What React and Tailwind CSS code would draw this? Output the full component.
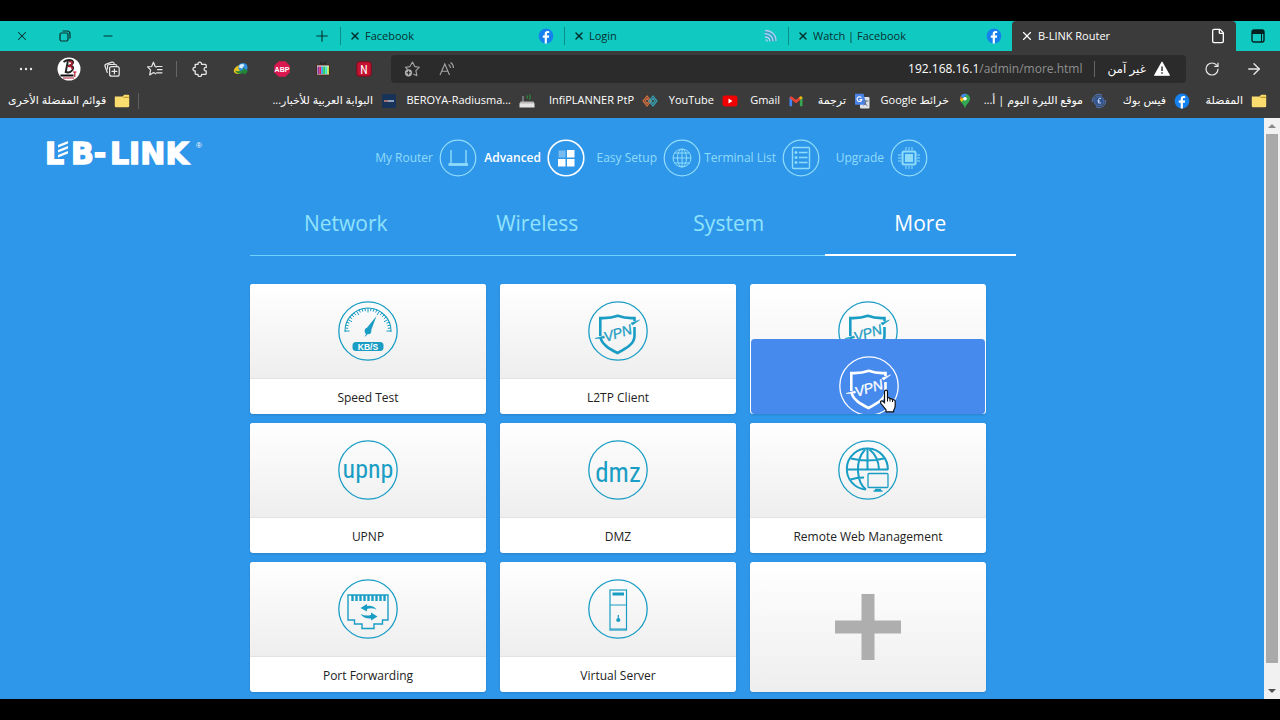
import React from "react";
import { X, Plus, Minus, File, RotateCw, ArrowRight } from "lucide-react";

const latin = "font-['Open_Sans','DejaVu_Sans',sans-serif]";

/* ---------- browser icons ---------- */

function Facebook() {
  return (
    <svg viewBox="0 0 16 16" className="size-4 shrink-0" aria-hidden="true">
      <circle cx="8" cy="8" r="7.4" fill="#1580ee" />
      <path d="M8.9 15.4V9.7h1.9l.4-2.2H8.9V6.2c0-.7.4-1.1 1.2-1.1h1.1V3.2c-.4-.1-1-.1-1.6-.1-1.8 0-2.9 1-2.9 2.8v1.6H4.8v2.2h1.9v5.7z" fill="#fff" />
    </svg>
  );
}

function Waves() {
  return (
    <svg viewBox="0 0 16 16" className="size-4 shrink-0" fill="none" strokeWidth="1.300" aria-hidden="true">
      <path d="M3 2.500c6.500 0 11 4 11 10.500M2.500 5.700c5 0 8.500 3 8.500 7.500M3 9c3.500 0 5 2 5 4.500M3.500 11.800c1.200 0 1.800.7 1.800 1.700" stroke="#b5cdf0" />
      <path d="M3 4.100c6 0 9.500 3.500 9.500 9M3 7.400c4 0 6.500 2.500 6.500 6" stroke="#4f86c6" strokeWidth=".9" />
    </svg>
  );
}

function Folder() {
  return (
    <svg viewBox="0 0 16 16" className="size-4 shrink-0" aria-hidden="true">
      <path d="M.8 3.500h8l1.200-1.700h4.200q1 0 1 1V13q0 1.200-1.200 1.200H2Q.8 14.200.8 13z" fill="#fbdc6e" />
      <path d="M9.500 4.300h5.700" stroke="#b98b1f" />
    </svg>
  );
}

function Restore() {
  return (
    <svg viewBox="0 0 12 12" className="size-3" fill="none" stroke="#0b2b2b" strokeWidth="1.2" aria-hidden="true">
      <rect x="1" y="3" width="8" height="8" rx="1.500" />
      <path d="M3.500 1h4.500q3 0 3 3v4.500" />
    </svg>
  );
}

function PageWindow() {
  return (
    <svg viewBox="0 0 14 14" className="size-3.5" aria-hidden="true">
      <rect x="1" y="1" width="12" height="12" rx="2" fill="none" stroke="#06201f" strokeWidth="1.400" />
      <path d="M1 2q0-1 1-1h10q1 0 1 1v3H1z" fill="#06201f" />
      <path d="M10.500 5v8" stroke="#06201f" />
    </svg>
  );
}

function Avatar() {
  return (
    <svg viewBox="0 0 24 24" className="size-6" aria-hidden="true">
      <circle cx="12" cy="12" r="11.500" fill="#fff" />
      <path d="M8.500 16 11 3.500M6.500 5q4-3 8.500-1.500c2.500 1.500.5 4.500-4 5.500 5-1 6 1.500 4.500 4-1.500 2-4 3-6.500 2" fill="none" stroke="#222" strokeWidth="1.900" />
      <path d="M12 4.500q4 0 3 2.500t-4 2.200q5 0 4 3" fill="none" stroke="#b3172b" strokeWidth="1.600" />
      <path d="M3.500 18.500h13" stroke="#111" strokeWidth="2" />
      <path d="M16 15h3.500M17.800 15v5M6 21h11" stroke="#b3172b" strokeWidth="1.200" />
    </svg>
  );
}

function Collections() {
  return (
    <svg viewBox="0 0 16 16" className="size-4" fill="none" stroke="#e8e8e8" strokeWidth="1.200" strokeLinecap="round" aria-hidden="true">
      <rect x="5.600" y="5.600" width="9.600" height="9.600" rx="2" />
      <path d="M10.400 8v4.800M8 10.400h4.800" />
      <path d="M3.300 11.500 1 5.300q-.4-1.700 1.200-2.200l5.800-2q1.600-.4 2.200 1.400" />
      <path d="M3.500 8V5.500q0-2 2-2h5.500q1.300 0 1.700.8" />
    </svg>
  );
}

function Favorites() {
  return (
    <svg viewBox="0 0 16 16" className="size-4" fill="none" stroke="#e8e8e8" strokeWidth="1.200" strokeLinejoin="round" strokeLinecap="round" aria-hidden="true">
      <path d="M9.500 6 8.200 5.600 6.400 1.200 4.700 5.500.6 5.900l3 3-.9 5 3.900-2.300 1.900 1.200M10 5.500h5M10.500 8.700h4.500M9.500 11.800h5.500" />
    </svg>
  );
}

function Extensions() {
  return (
    <svg viewBox="0 0 16 16" className="size-4" fill="none" stroke="#e8e8e8" strokeWidth="1.300" strokeLinejoin="round" aria-hidden="true">
      <path d="M3.200 3.400h2.700a1.900 1.900 0 1 1 3.700 0h3.700q.9 0 .9.900v2.200a1.700 1.700 0 1 0 0 3.300v2.600q0 .9-.9.900H9.600a1.900 1.900 0 1 1-3.700 0H4.100q-.9 0-.9-.9V9.900a1.800 1.800 0 1 1 0-3.500z" />
    </svg>
  );
}

function Idm() {
  return (
    <svg viewBox="0 0 16 16" className="size-4" aria-hidden="true">
      <ellipse cx="6.500" cy="8.500" rx="6" ry="4" transform="rotate(-25 6.500 8.500)" fill="#e9c21c" />
      <circle cx="10" cy="6.500" r="4.600" fill="#2f8fdb" />
      <path d="M6.500 4q2.500-2 5 0L9 7.500 6 6.500z" fill="#d9edf8" />
      <path d="M2 9.500q4 2 8.500-1l-.5-2 5 3.500-3.500 4-.7-2Q5 14.500 2 9.500z" fill="#23863a" />
    </svg>
  );
}

function Abp() {
  return (
    <svg viewBox="0 0 16 16" className="size-4" aria-hidden="true">
      <path d="M4.700.2h6.600l4.500 4.500v6.600l-4.500 4.500H4.700L.2 11.300V4.700z" fill="#d8184f" />
      <text x="8" y="10.500" textAnchor="middle" fontSize="7" fontWeight="700" fill="#fff" fontFamily="Liberation Sans, sans-serif">ABP</text>
    </svg>
  );
}

function Tv() {
  return (
    <svg viewBox="0 0 16 16" className="size-4" aria-hidden="true">
      <path d="m5 1 3 3 3-3" fill="none" stroke="#222" strokeWidth="1.200" />
      <rect x="1.500" y="4" width="13" height="10" fill="#eee" stroke="#4a2c1c" />
      <path d="M3.200 5.500V13" stroke="#7a3fa0" strokeWidth="1.600" />
      <path d="M5.200 5.500V13" stroke="#e21b5a" strokeWidth="2" />
      <path d="M7.200 5.500V13" stroke="#30a7f0" strokeWidth="2" />
      <path d="M9.200 5.500V13" stroke="#35c94e" strokeWidth="2" />
      <path d="M11.200 5.500V13" stroke="#3de1d1" strokeWidth="2" />
      <path d="M13.200 5.500V13" stroke="#b4e84a" strokeWidth="1.600" />
    </svg>
  );
}

function NBox() {
  return (
    <svg viewBox="0 0 16 16" className="size-4" aria-hidden="true">
      <rect x=".8" y=".8" width="14.400" height="14.400" rx="2.500" fill="#c41230" stroke="#7d0a1d" />
      <text x="8" y="12.500" textAnchor="middle" fontSize="12" fill="#fff" fontFamily="Roboto Condensed, Liberation Sans, sans-serif">N</text>
    </svg>
  );
}

function AddFavorite() {
  return (
    <svg viewBox="0 0 16 16" className="size-4" fill="none" stroke="#a5a5a5" strokeWidth="1.100" strokeLinejoin="round" aria-hidden="true">
      <path d="M3.600 8.500 1.400 6.200l4.500-.6L8.500 1l2.300 4.600 4.600.6-3.500 3.500 1 5-3.500-1.800" />
      <circle cx="4.500" cy="11.800" r="3.600" fill="#b0b0b0" stroke="none" />
      <path d="M4.500 9.800v4M2.500 11.800h4" stroke="#2b2b2b" />
    </svg>
  );
}

function ReadAloud() {
  return (
    <svg viewBox="0 0 16 16" className="size-4" fill="none" stroke="#a5a5a5" strokeWidth="1.100" aria-hidden="true">
      <path d="M1 14 5.800 3l4.700 11M2.800 10.200h6M9.500 3.500q2 1.200 2 3.500M11.500 1.500q3 1.700 3 5.500" />
    </svg>
  );
}

function Warning() {
  return (
    <svg viewBox="0 0 16 16" className="size-4 shrink-0" aria-hidden="true">
      <path d="M8 1.200 15.300 14.200H.7z" fill="#fff" stroke="#fff" strokeWidth="1.200" strokeLinejoin="round" />
      <path d="M8 5.500v4.500M8 11.300v1.500" stroke="#222" strokeWidth="1.400" />
    </svg>
  );
}

function Radius() {
  return (
    <svg viewBox="0 0 16 16" className="size-4 shrink-0" aria-hidden="true">
      <path d="M4 3v7" stroke="#aaa" />
      <path d="M1.500 8.500h13l1 2.500H.5z" fill="#bbb" />
      <rect x=".5" y="10.500" width="15" height="4" fill="#e4e4e4" />
      <path d="M8 5.500q1-1.500 0-3M10.500 6.500q1.500-2.500 0-5" fill="none" stroke="#2c8a3d" strokeWidth="1.200" />
    </svg>
  );
}

function Infi() {
  return (
    <svg viewBox="0 0 16 16" className="size-4 shrink-0" fill="none" strokeWidth="1.200" aria-hidden="true">
      <path d="M5 3 1 8l4 5 4-5zM5 5.500 3 8l2 2.500L7 8z" stroke="#d9703f" />
      <path d="M11 3 7 8l4 5 4-5zM11 5.500 9 8l2 2.500L13 8z" stroke="#35a3b5" />
    </svg>
  );
}

function YouTube() {
  return (
    <svg viewBox="0 0 16 16" className="size-4 shrink-0" aria-hidden="true">
      <rect x=".5" y="2.500" width="15" height="11" rx="3" fill="#f00000" />
      <path d="M6.500 5.600v4.800l4-2.400z" fill="#fff" />
    </svg>
  );
}

function GmailMark() {
  return (
    <svg viewBox="0 0 16 16" className="size-4 shrink-0" fill="none" strokeWidth="2.600" aria-hidden="true">
      <path d="M2.800 13.200V4" stroke="#4285f4" />
      <path d="M13.200 13.200V4" stroke="#34a853" />
      <path d="M2.200 4 8 8.500 13 4.500" stroke="#ea4335" />
      <path d="m11.800 5.500 2-1.600" stroke="#fbbc04" />
    </svg>
  );
}

function Translate() {
  return (
    <svg viewBox="0 0 16 16" className="size-4 shrink-0" aria-hidden="true">
      <rect x="6" y="4" width="9.500" height="11.500" rx="1" fill="#dfe3e8" />
      <path d="M1 .8h8.500l3 11H1z" fill="#4c83e6" />
      <path d="M7.300 4.600a2.400 2.400 0 1 0 .5 2H5.500" fill="none" stroke="#fff" strokeWidth="1.100" />
      <path d="M9.500 8h5M12 7v1.500q-.5 2.500-2.500 4M10.500 10q1 2 3 2.800" fill="none" stroke="#66717f" strokeWidth=".9" />
    </svg>
  );
}

function MapPin() {
  return (
    <svg viewBox="0 0 16 16" className="size-4 shrink-0" aria-hidden="true">
      <path d="M8 .8a5 5 0 0 1 5 5c0 3.600-3.800 5-5 9.400-1.200-4.400-5-5.800-5-9.400a5 5 0 0 1 5-5z" fill="#34a853" />
      <path d="M8 .8a5 5 0 0 0-4.200 2.300L6.300 5 10 1.200A5 5 0 0 0 8 .8z" fill="#4285f4" />
      <path d="M3.800 3.100A5 5 0 0 0 3 6l3 1z" fill="#ea4335" />
      <path d="M3 5.800q.2 1.700 1.500 3.200L9.500 4 6.300 5z" fill="#fbbc04" />
      <circle cx="8" cy="5.800" r="1.800" fill="#fff" />
    </svg>
  );
}

function Lira() {
  return (
    <svg viewBox="0 0 16 16" className="size-4 shrink-0" fill="none" stroke="#4c6fa8" aria-hidden="true">
      <circle cx="8" cy="8" r="5" fill="#33548f" />
      <path d="M1.500 9A6.500 6.500 0 0 1 11 2.200M14.500 7A6.500 6.500 0 0 1 5 13.800" strokeWidth="1.200" />
      <path d="M10 5.500q-2.500-1-2.500 1v3.500H10M6.500 8h2.500" stroke="#c7d5ee" />
    </svg>
  );
}

function NewsMark() {
  return (
    <svg viewBox="0 0 16 16" className="size-4 shrink-0" aria-hidden="true">
      <rect x="1" y="1" width="14" height="14" rx="1" fill="#18335a" />
      <path d="M3 8h4" stroke="#d08a80" strokeWidth="1.500" />
      <path d="M7 8h6" stroke="#b9c6db" strokeWidth="1.500" />
    </svg>
  );
}

/* ---------- router page icons ---------- */

function Logo() {
  return (
    <svg viewBox="-6 -6 176 44" className="h-11 w-44 shrink-0" fill="#fff" role="img" aria-label="B-LINK">
      <g fontFamily="DejaVu Sans, sans-serif" fontWeight="700" fontSize="30" stroke="#fff" strokeWidth="1.400">
        <text x="-1" y="26">L</text>
        <text x="25" y="26">B-</text>
        <text x="64" y="26">LINK</text>
      </g>
      <path d="m12 7 10-4v2.500l-10 4zM12 12l10-4v2.500l-10 4zM12 17l10-4v2.500l-10 4z" />
      <text x="150" y="10" fontSize="8" fontFamily="Liberation Sans, sans-serif">®</text>
    </svg>
  );
}

function NavCircle({ children, active }) {
  return (
    <svg viewBox="0 0 38 38" className="size-[38px] shrink-0" fill="none" stroke="currentColor" aria-hidden="true">
      <circle cx="19" cy="19" r="17.800" strokeWidth={active ? 1.6 : 1.2} />
      {children}
    </svg>
  );
}

const navIcons = {
  router: (
    <g>
      <path d="M12 11v13M27 11v13" strokeWidth="1.400" />
      <path d="M9.500 25.500h19.500" strokeWidth="2.800" />
    </g>
  ),
  tiles: (
    <g stroke="none" fill="currentColor">
      <rect x="11.500" y="11.500" width="7" height="7" opacity=".35" />
      <rect x="20" y="11" width="7.500" height="7.500" />
      <rect x="11" y="20" width="7.500" height="7.500" />
      <rect x="20" y="20" width="7.500" height="7.500" />
    </g>
  ),
  globe: (
    <g strokeWidth="1">
      <circle cx="19" cy="19" r="9" />
      <ellipse cx="19" cy="19" rx="4.500" ry="9" />
      <path d="M19 10v18M10 19h18M11.500 14h15M11.500 24h15" />
    </g>
  ),
  list: (
    <g strokeWidth="1.400">
      <rect x="10.500" y="8.500" width="17" height="21" rx="1" />
      <path d="M12.500 13.500h3M17 13.500h8.500M12.500 18.500h3M17 18.500h8.500M12.500 23.500h3M17 23.500h8.500M14 12v3M14 17v3M14 22v3" />
    </g>
  ),
  chip: (
    <g>
      <rect x="12.500" y="12.500" width="13" height="13" rx="1.500" strokeWidth="2" />
      <rect x="15" y="15" width="8" height="8" fill="currentColor" stroke="none" />
      <path d="M16 8v3M19 8v3M22 8v3M16 27v3M19 27v3M22 27v3M8 16h3M8 19h3M8 22h3M27 16h3M27 19h3M27 22h3" />
    </g>
  ),
};

function CardIcon({ children }) {
  return (
    <svg viewBox="0 0 60 60" className="size-[60px]" fill="none" stroke="currentColor" aria-hidden="true">
      <circle cx="30" cy="30" r="29.200" strokeWidth="1.300" />
      {children}
    </svg>
  );
}

const ticks = Array.from({ length: 25 }, (_, i) => {
  const a = Math.PI - (i * Math.PI) / 24;
  const inner = i % 4 === 0 ? 18.5 : 20;
  return (
    <path
      key={i}
      d={`M${30 + inner * Math.cos(a)} ${30 - inner * Math.sin(a)}L${30 + 23 * Math.cos(a)} ${30 - 23 * Math.sin(a)}`}
    />
  );
});

const speedIcon = (
  <CardIcon>
    <path d="M7 31v-1a23 23 0 0 1 46 0v1" strokeWidth="1.100" />
    <g strokeWidth="1">{ticks}</g>
    <path d="M38.500 15 32.500 31l-5-2.500zM28.500 32l-2 4 3-2.500z" fill="currentColor" stroke="none" />
    <circle cx="30" cy="30" r="3.300" fill="currentColor" stroke="none" />
    <rect x="14.500" y="41" width="31" height="9" rx="3.500" fill="currentColor" stroke="none" />
    <text x="30" y="48.500" textAnchor="middle" fontSize="8.500" fontWeight="700" fill="#fff" stroke="none" fontFamily="Liberation Sans, sans-serif">KB/S</text>
  </CardIcon>
);

const vpnIcon = (
  <CardIcon>
    <path d="M12.300 35V17q10 .5 17.500-2.200Q37 17.500 46.500 17v3" strokeWidth="2.600" />
    <path d="M46.500 26v9c0 8-8.500 12.500-17 17-8-4-15-8-17-15" strokeWidth="2.600" />
    <path d="m7 37.500 9-2.500.5 2zM43 22l8.500-3-7 5z" fill="currentColor" stroke="currentColor" strokeWidth=".6" />
    <text x="30" y="37" textAnchor="middle" transform="rotate(-17 30 33)" fontSize="14" fontStyle="italic" fill="currentColor" strokeWidth=".3" fontFamily="Liberation Sans, sans-serif">VPN</text>
  </CardIcon>
);

const upnpIcon = (
  <CardIcon>
    <text x="30" y="38" textAnchor="middle" fontSize="26" fill="currentColor" stroke="none" fontFamily="Roboto Condensed, Liberation Sans Narrow, Liberation Sans, sans-serif">upnp</text>
  </CardIcon>
);

const dmzIcon = (
  <CardIcon>
    <text x="30" y="42" textAnchor="middle" fontSize="27" fill="currentColor" stroke="none" fontFamily="Roboto Condensed, Liberation Sans Narrow, Liberation Sans, sans-serif">dmz</text>
  </CardIcon>
);

const remoteIcon = (
  <CardIcon>
    <g strokeWidth="2">
      <path d="M28 49.500A20.500 20.500 0 1 1 49.800 30" />
      <path d="M29.500 9v20.500M9.500 29.500h40.500M13 18.500q16.500 4 33 0M12.500 39.500q6-2 13.500-2M28 49.500c-9-7-12-27.500-1-40M31.500 9.500q9 7 9.500 20" />
    </g>
    <rect x="30" y="33.500" width="20" height="14" rx="1" strokeWidth="1.300" />
    <path d="M37 49.500h6M35.500 51h9" strokeWidth="1.300" />
  </CardIcon>
);

const portIcon = (
  <CardIcon>
    <path d="M10 16h40v25h-5.500v4H36v4.500H24V45h-7.500v-4H10z" strokeWidth="1.400" />
    <path d="M14.500 16v6M18.500 16v6M22.500 16v6M26.500 16v6M30.500 16v6M34.500 16v6M38.500 16v6M42.500 16v6M46.500 16v6" strokeWidth="2.400" />
    <path d="m22.500 29 6.500-4v2q6-1 9.500 3.500-5-2-9.500-.5v2.500zM39.500 37.500l-6.500 4v-2q-7 .5-10.500-4.500 5 2.500 10.500 1v-2.500z" fill="currentColor" stroke="none" />
  </CardIcon>
);

const serverIcon = (
  <CardIcon>
    <rect x="22" y="11" width="16.500" height="40" strokeWidth="1.200" />
    <path d="M22 26h16.500M22 50h16.500" strokeWidth="1.200" />
    <path d="M24.500 15h11.500" strokeWidth="3.200" />
    <circle cx="30.300" cy="41" r="2.100" fill="currentColor" stroke="none" />
    <path d="M30.300 36v3" strokeWidth="1.200" />
  </CardIcon>
);

/* ---------- data ---------- */

const tabs = [
  { title: "Facebook", icon: <Facebook /> },
  { title: "Login", icon: <Waves /> },
  { title: "Watch | Facebook", icon: <Facebook /> },
];

const bookmarks = [
  { label: "البوابة العربية للأخبار...", icon: <NewsMark />, size: "w-[134px]", rtl: true },
  { label: "BEROYA-Radiusma...", icon: <Radius />, size: "w-[138px]" },
  { label: "InfiPLANNER PtP", icon: <Infi />, size: "w-[123px]" },
  { label: "YouTube", icon: <YouTube />, size: "w-20" },
  { label: "Gmail", icon: <GmailMark />, size: "w-[66px]" },
  { label: "ترجمة", icon: <Translate />, size: "w-[66px]", rtl: true },
  { label: "خرائط Google", icon: <MapPin />, size: "w-[103px]", rtl: true },
  { label: "موقع الليرة اليوم | أ...", icon: <Lira />, size: "w-[134px]", rtl: true },
  { label: "فيس بوك", icon: <Facebook />, size: "w-[83px]", rtl: true },
  { label: "المفضلة", icon: <Folder />, size: "w-[77px]", rtl: true },
];

const nav = [
  { label: "My Router", icon: "router", size: "w-[104px]" },
  { label: "Advanced", icon: "tiles", size: "w-[98px]", active: true },
  { label: "Easy Setup", icon: "globe", size: "w-[106px]" },
  { label: "Terminal List", icon: "list", size: "w-[109px]" },
  { label: "Upgrade", icon: "chip", size: "w-[98px]" },
];

const sections = ["Network", "Wireless", "System", "More"];

/* ---------- parts ---------- */

function Cell({ label, className, children }) {
  return (
    <button type="button" aria-label={label} className={`flex shrink-0 items-center justify-center ${className}`}>
      {children}
    </button>
  );
}

function TabBar() {
  return (
    <div className="flex h-[30px] bg-[#10cac2] text-[11px] text-[#06302f]">
      <Cell label="Close" className="w-[43px]"><X className="size-3.5" strokeWidth={1.8} /></Cell>
      <Cell label="Restore" className="w-[43px]"><Restore /></Cell>
      <Cell label="Minimize" className="w-[43px]"><Minus className="size-3.5" strokeWidth={1.8} /></Cell>
      <Cell label="New tab" className="ml-auto w-9"><Plus className="size-[18px]" strokeWidth={1.5} /></Cell>
      {tabs.map((t) => (
        <div key={t.title} className="flex w-56 items-center gap-1 pr-2.5">
          <span className="h-[18px] w-px bg-[#0a8f8a]" />
          <button type="button" aria-label={`Close ${t.title}`} className="ml-1"><X className="size-3" strokeWidth={3} /></button>
          <span className="grow truncate">{t.title}</span>
          {t.icon}
        </div>
      ))}
      <div className="flex w-56 items-center gap-1 rounded-t-sm bg-[#3b3b3b] pr-2.5 pl-2 text-white">
        <button type="button" aria-label="Close B-LINK Router"><X className="size-3.5" strokeWidth={2} /></button>
        <span className="grow truncate">B-LINK Router</span>
        <File className="size-4" strokeWidth={2} />
      </div>
      <Cell label="Tab actions" className="w-11"><PageWindow /></Cell>
    </div>
  );
}

function Toolbar() {
  return (
    <div className="flex h-9 items-stretch bg-[#3b3b3b] pr-[5px] pl-1 text-[#e8e8e8]">
      <Cell label="Settings and more" className="w-[43px]">
        <svg viewBox="0 0 16 4" className="h-1 w-4" fill="currentColor" aria-hidden="true">
          <circle cx="3" cy="2" r="1.200" /><circle cx="8" cy="2" r="1.200" /><circle cx="13" cy="2" r="1.200" />
        </svg>
      </Cell>
      <Cell label="Profile" className="w-[43px]"><Avatar /></Cell>
      <Cell label="Collections" className="w-[43px]"><Collections /></Cell>
      <Cell label="Favorites" className="w-[43px]"><Favorites /></Cell>
      <span className="my-auto mr-0.5 h-4 w-px bg-[#666]" />
      <Cell label="Extensions" className="w-[41px]"><Extensions /></Cell>
      <Cell label="Download manager" className="w-[41px]"><Idm /></Cell>
      <Cell label="Ad blocker" className="w-[41px]"><Abp /></Cell>
      <Cell label="TV" className="w-[41px]"><Tv /></Cell>
      <Cell label="N extension" className="w-[41px]"><NBox /></Cell>
      <div className="my-1 mr-[5px] ml-[7px] flex grow items-center rounded bg-[#2b2b2b]">
        <Cell label="Add to favorites" className="w-[42px]"><AddFavorite /></Cell>
        <Cell label="Read aloud" className="w-7"><ReadAloud /></Cell>
        <span className="ml-auto text-xs text-[#8f8f8f]"><span className="text-white">192.168.16.1</span>/admin/more.html</span>
        <span className="mx-3 h-4 w-px bg-[#666]" />
        <span dir="rtl" lang="ar" className="mr-2 text-xs text-white">غير آمن</span>
        <span className="mr-4"><Warning /></span>
      </div>
      <Cell label="Refresh" className="w-[42px]"><RotateCw className="size-4" strokeWidth={1.8} /></Cell>
      <Cell label="Back" className="w-[42px]"><ArrowRight className="size-[18px]" strokeWidth={1.8} /></Cell>
    </div>
  );
}

function BookmarkBar() {
  return (
    <div className="flex h-[31px] items-center bg-[#3b3b3b] pr-[13px] pb-1 pl-2 text-[11px] text-white">
      <a href="#other" className="flex items-center gap-2">
        <span dir="rtl" lang="ar" className="whitespace-nowrap">قوائم المفضلة الأخرى</span>
        <Folder />
      </a>
      <span className="mr-auto ml-2 h-4 w-px bg-[#5e5e5e]" />
      {bookmarks.map((b) => (
        <a key={b.label} href="#bookmark" className={`flex items-center justify-end gap-2 whitespace-nowrap ${b.size}`}>
          <span dir={b.rtl ? "rtl" : "ltr"}>{b.label}</span>
          {b.icon}
        </a>
      ))}
    </div>
  );
}

function Card({ icon, label }) {
  return (
    <button type="button" className="flex h-[130px] flex-col overflow-hidden rounded-[3px] bg-white text-xs text-[#222] shadow-sm">
      <span className="flex h-[95px] w-full justify-center border-b border-[#e2e2e2] bg-linear-to-b from-white to-[#eeeeee] pt-[17px] text-[#1a9dc4]">{icon}</span>
      <span className="flex w-full grow items-center justify-center pt-0.5">{label}</span>
    </button>
  );
}

function HoverCard() {
  return (
    <button type="button" className="relative flex h-[130px] cursor-pointer justify-center overflow-hidden rounded-[3px] bg-linear-to-b from-white to-[#eeeeee] pt-[17px] text-[#1a9dc4] shadow-sm">
      {vpnIcon}
      <span className="absolute inset-x-0 top-[55px] bottom-0 flex justify-center overflow-hidden rounded-sm border-x border-white bg-[#468aee] pt-[17px] pl-0.5 text-white">
        <span className="h-[60px]">{vpnIcon}</span>
      </span>
      <svg viewBox="0 0 18 24" className="absolute top-[105px] left-[129px] h-6 w-[18px]" aria-hidden="true">
        <path d="M5.500 14V3q0-1.800 1.500-1.800T8.500 3v6q1.700-.8 2.500.8 1.700-.7 2.500.9 2.500-.3 2.700 1.800v4q0 2.500-1.500 4.500v1.800H7v-2L2 14.500q-1-1.800.3-2.500t3.200 2z" fill="#fff" stroke="#111" strokeWidth="1.200" strokeLinejoin="round" />
        <path d="M8.500 9v3.500M11 10v2.500M13.500 11v2" stroke="#111" />
      </svg>
    </button>
  );
}

function RouterPage() {
  return (
    <div className="grow overflow-hidden bg-[#2f97ea] pb-[7px]">
      <header className="flex items-start pt-3.5 pl-10">
        <Logo />
        <nav className="mt-[7px] ml-[157px] flex gap-2.5 text-xs text-[#8fdcfa]">
          {nav.map((n) => (
            <a
              key={n.label}
              href="#nav"
              className={`flex items-center justify-end gap-1.5 whitespace-nowrap ${n.size} ${n.active ? "font-semibold text-white" : ""}`}
            >
              {n.label}
              <NavCircle active={n.active}>{navIcons[n.icon]}</NavCircle>
            </a>
          ))}
        </nav>
      </header>
      <main className="mx-auto w-3xl max-w-full pl-0.5">
        <nav className="mt-[30px] grid grid-cols-4 border-b border-[#6fd3fb] text-center text-[21px] leading-8 text-[#8fe3fb]">
          {sections.map((s) => (
            <a
              key={s}
              href="#section"
              className={s === "More" ? "-mb-px border-b-2 border-white pb-[15px] text-white" : "pb-[15px]"}
            >
              {s}
            </a>
          ))}
        </nav>
        <div className="mt-7 mr-[30px] grid grid-cols-3 gap-x-3.5 gap-y-[9px]">
          <Card icon={speedIcon} label="Speed Test" />
          <Card icon={vpnIcon} label="L2TP Client" />
          <HoverCard />
          <Card icon={upnpIcon} label="UPNP" />
          <Card icon={dmzIcon} label="DMZ" />
          <Card icon={remoteIcon} label="Remote Web Management" />
          <Card icon={portIcon} label="Port Forwarding" />
          <Card icon={serverIcon} label="Virtual Server" />
          <button type="button" aria-label="Add" className="flex h-[130px] items-center justify-center rounded-[3px] bg-linear-to-b from-white to-[#eeeeee] shadow-sm">
            <svg viewBox="0 0 66 66" className="size-[66px]" aria-hidden="true">
              <path d="M33 0v66M0 33h66" stroke="#aeaeae" strokeWidth="13" />
            </svg>
          </button>
        </div>
      </main>
    </div>
  );
}

function Scrollbar() {
  return (
    <div className="flex w-4 shrink-0 flex-col items-center bg-[#f1f1f1] py-1.5" aria-hidden="true">
      <svg viewBox="0 0 8 4" className="h-1 w-2"><path d="M4 0 8 4H0z" fill="#8a8a8a" /></svg>
      <span className="mt-1.5 mb-[26px] w-3 grow bg-[#a9a9a9]" />
      <svg viewBox="0 0 8 4" className="h-1 w-2"><path d="M0 0h8L4 4z" fill="#505050" /></svg>
    </div>
  );
}

export default function App() {
  return (
    <div className={`min-h-screen bg-black py-[21px] ${latin}`}>
      <TabBar />
      <Toolbar />
      <BookmarkBar />
      <div className="flex">
        <RouterPage />
        <Scrollbar />
      </div>
    </div>
  );
}
